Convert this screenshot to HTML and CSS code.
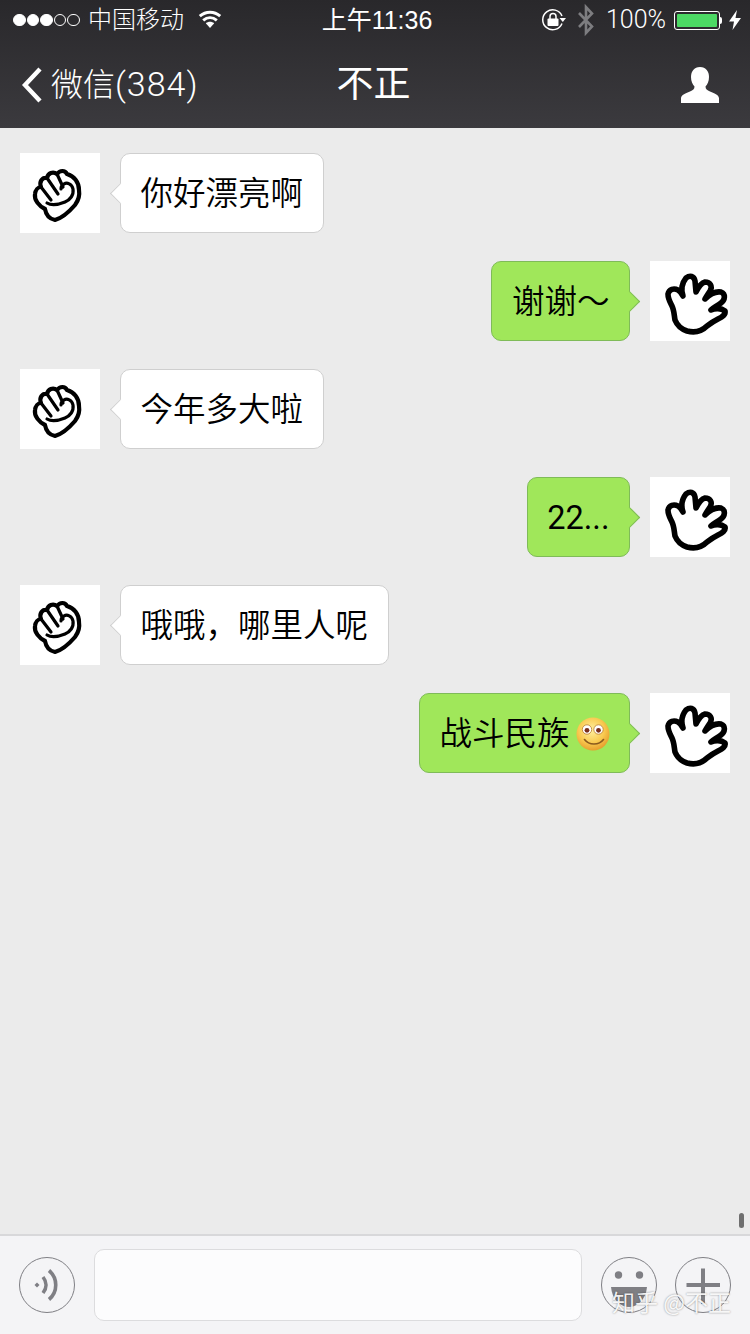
FILE: index.html
```html
<!DOCTYPE html>
<html lang="zh-CN">
<head>
<meta charset="utf-8">
<title>不正</title>
<link rel="stylesheet" href="styles.css">
</head>
<body>
<svg class="defs" width="0" height="0" aria-hidden="true">
  <defs>
    <symbol id="fist" viewBox="0 0 80 80">
      <path class="draw" d="M35 67C30 66 26 62 25 56C19 53 14 47 15 41C15.500 37 18 34 21 34C19 29 22 24 27 25C28 20 33 18 37 21C40 17 45 17 47 21C54 23 59 29 59 37C60 43 58 48 55 52C49 59 42 65 35 67Z"/>
      <path class="ink" d="M21 34L31 47M27 25L38 41M37 21L43 34M27 50C32 53 40 51 45 49C50 47 54 42 53 36C52 31 47 29 44 31C42 32 41 34 41 36"/>
    </symbol>
    <symbol id="hand" viewBox="0 0 80 80">
      <path class="draw thick" d="M18 33C19 28 24 27 28 29C31 31 32 33 33 35C31 29 32 22 36 17C40 14 44 15 45 20L46 31C48 27 51 22 55 21C60 21 63 25 60 30C58 33 56 36 55 38C59 34 65 30 71 31C76 33 75 39 71 42C67 45 63 47 61 49C65 47 71 47 75 50C76 54 72 56 68 58C64 60 61 62 57 65C52 70 45 72 37 70C31 68 27 64 25 59C24 53 24 49 22 45C20 41 18 38 18 33Z"/>
    </symbol>
    <radialGradient id="smile" cx="45%" cy="38%" r="65%">
      <stop offset="0" stop-color="#fff0a0"/>
      <stop offset=".6" stop-color="#f9ca50"/>
      <stop offset="1" stop-color="#e59a2a"/>
    </radialGradient>
  </defs>
</svg>

<main class="phone">
  <header class="top">
    <div class="status">
      <div class="status-left">
        <span class="signal"><i class="dot on"></i><i class="dot on"></i><i class="dot on"></i><i class="dot"></i><i class="dot"></i></span>
        <span class="carrier">中国移动</span>
        <svg class="wifi" width="24" height="18" viewBox="0 0 24 18">
          <path d="M12 18L7.800 13.200C10.300 11.200 13.700 11.200 16.200 13.200Z" fill="#fff"/>
          <path d="M5.200 10.300C9.300 6.800 14.700 6.800 18.800 10.300M1.800 6.200C7.800 .8 16.200 .8 22.200 6.200" fill="none" stroke="#fff" stroke-width="3"/>
        </svg>
      </div>
      <div class="clock">上午11:36</div>
      <div class="status-right">
        <svg class="lock" width="25" height="24" viewBox="0 0 25 24">
          <path d="M21 15.500A10 10 0 1 1 21 8" fill="none" stroke="#fff" stroke-width="1.500"/>
          <path d="M18.500 10H25L21.800 14Z" fill="#fff"/>
          <rect x="6.500" y="10.500" width="11" height="7.500" rx="1" fill="#fff"/>
          <path d="M9 11V8.500a3 3 0 0 1 6 0V11" fill="none" stroke="#fff" stroke-width="1.500"/>
        </svg>
        <svg class="bt" width="18" height="34" viewBox="0 0 18 34">
          <path d="M2 10L15 23.500L9 30V4L15 10.500L2 24" fill="none" stroke="#7d7d80" stroke-width="2.600"/>
        </svg>
        <span class="percent">100%</span>
        <span class="battery"><span class="battery-fill"></span></span>
        <span class="nib"></span>
        <svg class="bolt" width="12" height="20" viewBox="0 0 12 20"><path d="M8 0L0 11.500H5L3.500 20L12 8H6.500Z" fill="#fff"/></svg>
      </div>
    </div>
    <nav class="nav">
      <div class="back">
        <svg class="chevron" width="22" height="36" viewBox="0 0 22 36"><path d="M19 2L4 18L19 34" fill="none" stroke="#fff" stroke-width="4.400"/></svg>
        <span>微信<span class="count">(384)</span></span>
      </div>
      <h1 class="title">不正</h1>
      <div class="nav-right">
        <svg width="38" height="36" viewBox="0 0 38 36"><path d="M19 0C25 0 28 4.500 28 10C28 14 26.500 17.500 24.500 19.500C24.500 22 26 23 29 24.500C34 26.500 38 28 38 31.500V36H0V31.500C0 28 4 26.500 9 24.500C12 23 13.500 22 13.500 19.500C11.500 17.500 10 14 10 10C10 4.500 13 0 19 0Z" fill="#fff"/></svg>
      </div>
    </nav>
  </header>

  <section class="chat">
    <div class="row">
      <div class="avatar"><svg><use href="#fist"/></svg></div>
      <div class="bubble in">你好漂亮啊</div>
    </div>
    <div class="row me">
      <div class="avatar"><svg><use href="#hand"/></svg></div>
      <div class="bubble out">谢谢～</div>
    </div>
    <div class="row">
      <div class="avatar"><svg><use href="#fist"/></svg></div>
      <div class="bubble in">今年多大啦</div>
    </div>
    <div class="row me">
      <div class="avatar"><svg><use href="#hand"/></svg></div>
      <div class="bubble out latin">22...</div>
    </div>
    <div class="row">
      <div class="avatar"><svg><use href="#fist"/></svg></div>
      <div class="bubble in">哦哦，哪里人呢</div>
    </div>
    <div class="row me">
      <div class="avatar"><svg><use href="#hand"/></svg></div>
      <div class="bubble out">战斗民族<svg class="emoji" width="34" height="34" viewBox="0 0 34 34">
          <circle cx="17" cy="17" r="16.500" fill="url(#smile)"/>
          <circle cx="11" cy="12.500" r="4.700" fill="#fff" stroke="#b9782a" stroke-width=".8"/>
          <circle cx="22.500" cy="12.500" r="4.700" fill="#fff" stroke="#b9782a" stroke-width=".8"/>
          <circle cx="11" cy="13.300" r="2.400" fill="#7a2f1c"/>
          <circle cx="22.500" cy="13.300" r="2.400" fill="#7a2f1c"/>
          <path d="M8.500 22.500C13 28.500 23 28.500 27.500 22.500" fill="none" stroke="#8a5a1e" stroke-width="1.600" stroke-linecap="round"/>
        </svg></div>
    </div>
    <span class="scroll-thumb"></span>
  </section>

  <footer class="bar">
    <div class="round">
      <svg width="56" height="56" viewBox="0 0 56 56">
        <path d="M15.500 28L18 25.500L20.500 28L18 30.500Z" fill="#7f7f84"/>
        <path d="M24 20C28 25 28 31 24 36M30 13.500C39 21 39 35 30 42.500" fill="none" stroke="#7f7f84" stroke-width="3.600"/>
      </svg>
    </div>
    <div class="input"></div>
    <div class="round">
      <svg width="56" height="56" viewBox="0 0 56 56">
        <circle cx="17.500" cy="18" r="3.700" fill="#7f7f84"/>
        <circle cx="38.500" cy="18" r="3.700" fill="#7f7f84"/>
        <path d="M10 30H46C45 42 37 50 28 50C19 50 11 42 10 30Z" fill="#7f7f84"/>
      </svg>
    </div>
    <div class="round">
      <svg width="56" height="56" viewBox="0 0 56 56">
        <path d="M28 11.500V47M11.500 28H45" fill="none" stroke="#7f7f84" stroke-width="4"/>
      </svg>
    </div>
    <span class="watermark">知乎 @不正</span>
  </footer>
</main>
</body>
</html>
```
FILE: styles.css
```css
* { box-sizing: border-box; }
html, body { margin: 0; padding: 0; }
body {
  background: #ebebeb;
  font-family: Roboto, "Noto Sans CJK SC", sans-serif;
}
.defs { position: absolute; }
.draw { fill: #fff; stroke: #000; stroke-width: 4.200; stroke-linejoin: round; }
.draw.thick { stroke-width: 5.600; }
.ink { fill: none; stroke: #000; stroke-width: 3.200; stroke-linecap: round; stroke-linejoin: round; }

.phone {
  width: 750px;
  height: 1334px;
  display: flex;
  flex-direction: column;
  overflow: hidden;
}

/* header */
.top {
  height: 128px;
  flex: none;
  color: #fff;
  background: linear-gradient(#29282b, #3b3a3e);
}
.status {
  height: 40px;
  padding: 0 9px 0 13px;
  display: grid;
  grid-template-columns: 1fr auto 1fr;
  align-items: center;
}
.status-left, .status-right { display: flex; align-items: center; }
.status-right { justify-content: flex-end; }
.signal { display: flex; gap: 1px; align-items: center; margin-right: 8px; }
.dot {
  width: 12.600px;
  height: 12.600px;
  border-radius: 50%;
  border: 1.200px solid #fff;
}
.dot.on { background: #fff; }
.carrier { font-size: 24px; font-weight: 300; line-height: 40px; }
.wifi { margin-left: 14px; margin-top: -3px; }
.clock { font-size: 25px; line-height: 40px; font-family: "Liberation Sans", "Noto Sans CJK SC", sans-serif; }
.lock { margin-right: 11px; }
.bt { margin-right: 11px; }
.percent { font-size: 25px; font-weight: 300; margin-right: 8px; line-height: 40px; }
.battery {
  width: 46px;
  height: 19px;
  padding: 2px;
  border: 1px solid #fff;
  border-radius: 3px;
  display: flex;
}
.battery-fill { flex: 1; background: #4cd964; border-radius: 1px; }
.nib { width: 2px; height: 7px; background: #fff; border-radius: 0 2px 2px 0; margin-right: 7px; }
.bolt { margin-right: 0; }

.nav {
  height: 88px;
  padding: 0 25px 0 22px;
  display: grid;
  grid-template-columns: 1fr auto 1fr;
  align-items: center;
}
.back {
  display: flex;
  align-items: center;
  gap: 8px;
  font-size: 32px;
  font-weight: 300;
  line-height: 88px;
}
.count { font-size: 34px; letter-spacing: 1px; }
.chevron { margin-left: -1px; }
.title {
  margin: 0;
  font-size: 37px;
  font-weight: 400;
  line-height: 88px;
}
.nav-right { display: flex; justify-content: flex-end; align-items: center; padding-right: 6px; }

/* chat */
.chat {
  flex: 1;
  position: relative;
  padding: 25px 20px 0;
  display: flex;
  flex-direction: column;
  gap: 28px;
  background: #ebebeb;
}
.row { display: flex; gap: 20px; height: 80px; }
.row.me { flex-direction: row-reverse; }
.avatar { width: 80px; height: 80px; flex: none; background: #fff; }
.avatar svg { width: 80px; height: 80px; display: block; }
.bubble {
  position: relative;
  height: 80px;
  padding: 1px 19.500px 0;
  display: flex;
  align-items: center;
  font-size: 32.500px;
  line-height: 44px;
  color: #000;
  font-weight: 350;
  border-radius: 10px;
  border: 1px solid;
  white-space: nowrap;
}
.latin { font-weight: 400; }
.bubble::after {
  content: "";
  position: absolute;
  top: 32px;
  width: 14px;
  height: 14px;
  background: inherit;
  border: 1px solid;
  border-color: inherit;
  transform: rotate(45deg);
}
.in { background: #fff; border-color: #cfcfcf; }
.in::after { left: -8px; border-top-width: 0; border-right-width: 0; }
.out { background: #a0e75a; border-color: #7fbb58; }
.out::after { right: -8px; border-bottom-width: 0; border-left-width: 0; }
.emoji { margin-left: 6px; }
.scroll-thumb {
  position: absolute;
  right: 6px;
  bottom: 6px;
  width: 5px;
  height: 15px;
  border-radius: 3px;
  background: #6f6f6f;
}

/* input bar */
.bar {
  position: relative;
  height: 100px;
  flex: none;
  padding: 13px 19px;
  display: flex;
  align-items: center;
  gap: 19px;
  background: #f4f4f6;
  border-top: 2px solid #d8d8da;
}
.round {
  width: 56px;
  height: 56px;
  flex: none;
  border: 1px solid #7f7f84;
  border-radius: 50%;
}
.round svg { display: block; margin: -1px; }
.input {
  width: 488px;
  height: 72px;
  flex: none;
  background: #fcfcfd;
  border: 1px solid #dcdcde;
  border-radius: 10px;
}
.bar .round:last-of-type { margin-left: -1px; }
.watermark {
  position: absolute;
  left: 612px;
  top: 50px;
  font-size: 23px;
  line-height: 30px;
  color: rgba(255, 255, 255, .92);
  text-shadow: 0 0 2px rgba(0, 0, 0, .45);
  white-space: nowrap;
  font-family: "Noto Sans CJK SC", sans-serif;
}
```
